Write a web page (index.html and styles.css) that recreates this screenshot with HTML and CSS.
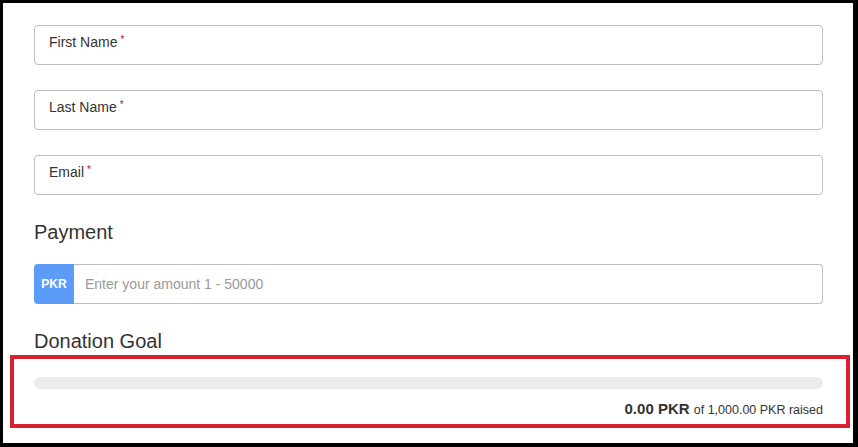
FILE: index.html
```html
<!DOCTYPE html>
<html lang="en">
<head>
<meta charset="utf-8">
<title>Donation Form</title>
<link rel="stylesheet" href="styles.css">
</head>
<body>
<div class="panel">
  <div class="field"><span class="field-label">First Name</span><span class="req">*</span></div>
  <div class="field"><span class="field-label">Last Name</span><span class="req">*</span></div>
  <div class="field"><span class="field-label">Email</span><span class="req">*</span></div>

  <h2 class="section-title">Payment</h2>
  <div class="amount">
    <span class="addon">PKR</span>
    <input class="amount-input" type="text" placeholder="Enter your amount 1 - 50000">
  </div>

  <h2 class="section-title goal-title">Donation Goal</h2>
  <div class="progress"><div class="progress-fill" style="width:0%"></div></div>
  <p class="raised"><strong>0.00 PKR</strong> <span class="of">of 1,000.00 PKR raised</span></p>

  <div class="highlight"></div>
</div>
</body>
</html>
```

FILE: styles.css
```css
html, body {
  margin: 0;
  padding: 0;
}
body {
  background: #000;
  padding: 3px 5px 4px 3px;
  font-family: "Liberation Sans", Arial, sans-serif;
  color: #333;
}
.panel {
  position: relative;
  background: #fff;
  height: 440px;
  box-sizing: border-box;
  padding: 22px 30px 0 31px;
}
.field {
  height: 40px;
  box-sizing: border-box;
  border: 1px solid #bdbdbd;
  border-radius: 4px;
  padding: 8px 14px;
  font-size: 14px;
  line-height: 16px;
  color: #333;
}
.field + .field {
  margin-top: 25px;
}
.req {
  color: #d0021b;
  font-size: 10px;
  line-height: 10px;
  vertical-align: 4px;
  margin-left: 3px;
}
.section-title {
  font-size: 20px;
  line-height: 22px;
  font-weight: normal;
  color: #333;
  margin: 26px 0 21px;
}
.goal-title {
  margin: 26px 0 25px;
}
.amount {
  display: flex;
  height: 40px;
}
.addon {
  width: 40px;
  flex: none;
  background: #5b9cf8;
  color: #fff;
  font-weight: bold;
  font-size: 12px;
  display: flex;
  align-items: center;
  justify-content: center;
  border-radius: 4px 0 0 4px;
}
.amount-input {
  flex: 1;
  min-width: 0;
  margin: 0;
  box-sizing: border-box;
  border: 1px solid #bdbdbd;
  border-left: none;
  border-radius: 0 4px 4px 0;
  padding: 0 11px;
  font-family: "Liberation Sans", Arial, sans-serif;
  font-size: 14px;
  color: #333;
  outline: none;
}
.amount-input::placeholder {
  color: #9a9a9a;
}
.progress {
  height: 12px;
  background: #ececec;
  border-radius: 6px;
  overflow: hidden;
}
.progress-fill {
  height: 100%;
  background: #5b9cf8;
}
.raised {
  margin: 11px 0 0;
  text-align: right;
  font-size: 15px;
  line-height: 17px;
  color: #333;
}
.raised strong {
  font-weight: bold;
}
.of {
  font-size: 12.5px;
}
.highlight {
  position: absolute;
  left: 7px;
  top: 352px;
  width: 840px;
  height: 73px;
  box-sizing: border-box;
  border: 4px solid #d9202e;
  pointer-events: none;
}
```
